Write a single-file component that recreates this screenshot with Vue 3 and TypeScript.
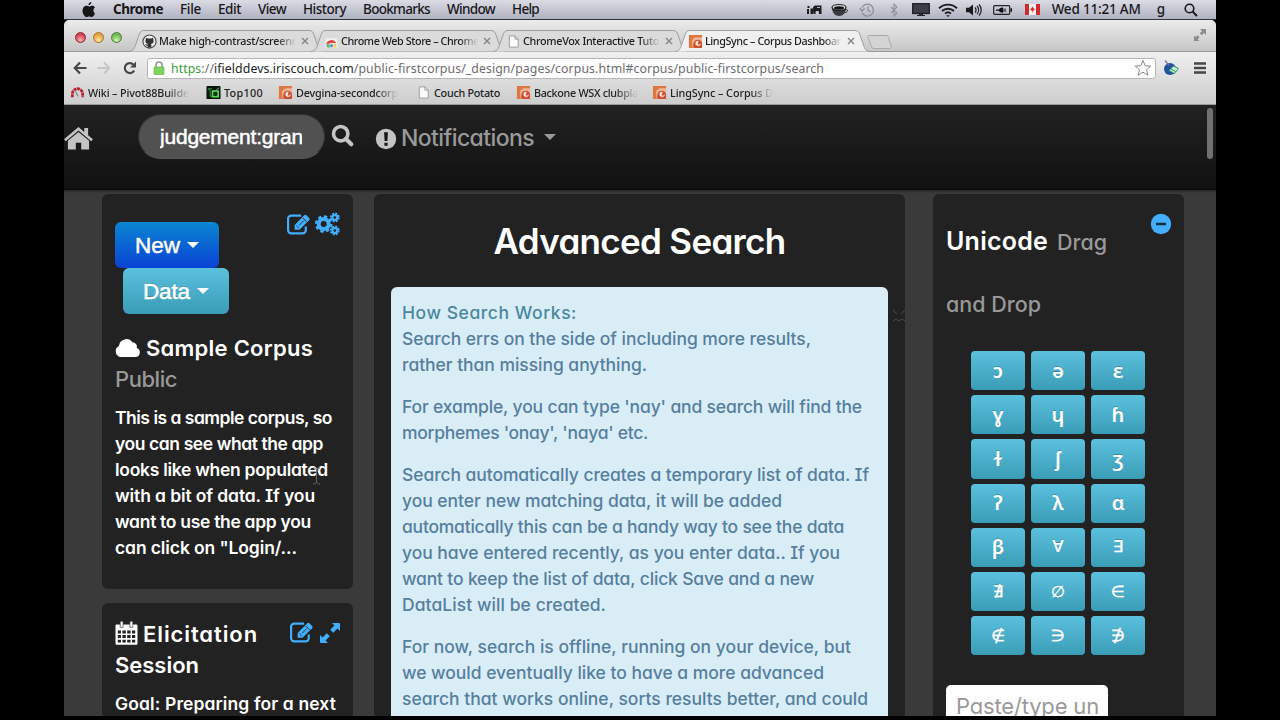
<script setup lang="ts">
import type { Directive } from 'vue'

// Spreads a single line of text over the given width by adjusting its tracking.
const vFit: Directive<HTMLElement, number> = {
  mounted(el, { value }) {
    const range = document.createRange()
    range.selectNodeContents(el)
    const natural = range.getBoundingClientRect().width
    const count = (el.textContent ?? '').trim().length
    el.style.letterSpacing = `${(value - natural) / count}px`
  },
}

interface Line { text: string; width: number }

const menus: Line[] = [
  { text: 'File', width: 21 },
  { text: 'Edit', width: 23 },
  { text: 'View', width: 28 },
  { text: 'History', width: 43 },
  { text: 'Bookmarks', width: 67 },
  { text: 'Window', width: 48 },
  { text: 'Help', width: 27 },
]

const tabs = [
  { icon: 'github', text: 'Make high-contrast/screenr', width: 137, active: false },
  { icon: 'store', text: 'Chrome Web Store – Chrome', width: 138, active: false },
  { icon: 'page', text: 'ChromeVox Interactive Tuto', width: 136, active: false },
  { icon: 'ling', text: 'LingSync – Corpus Dashboar', width: 136, active: true },
]

const bookmarks = [
  { icon: 'gauge', text: 'Wiki – Pivot88Builde', width: 101, gap: 17, fade: true },
  { icon: 'green', text: 'Top100', width: 39, gap: 15, fade: false },
  { icon: 'ling', text: 'Devgina-secondcorp', width: 102, gap: 18, fade: true },
  { icon: 'page', text: 'Couch Potato', width: 66, gap: 16, fade: false },
  { icon: 'ling', text: 'Backone WSX clubpla', width: 104, gap: 14, fade: true },
  { icon: 'ling', text: 'LingSync – Corpus D', width: 103, gap: 0, fade: true },
]

const corpusText: Line[] = [
  { text: 'This is a sample corpus, so', width: 217 },
  { text: 'you can see what the app', width: 208 },
  { text: 'looks like when populated', width: 213 },
  { text: 'with a bit of data. If you', width: 200 },
  { text: 'want to use the app you', width: 196 },
  { text: 'can click on "Login/...', width: 182 },
]

const help: Line[][] = [
  [
    { text: 'Search errs on the side of including more results,', width: 409 },
    { text: 'rather than missing anything.', width: 245 },
  ],
  [
    { text: "For example, you can type 'nay' and search will find the", width: 460 },
    { text: "morphemes 'onay', 'naya' etc.", width: 246 },
  ],
  [
    { text: 'Search automatically creates a temporary list of data. If', width: 467 },
    { text: 'you enter new matching data, it will be added', width: 380 },
    { text: 'automatically this can be a handy way to see the data', width: 442 },
    { text: 'you have entered recently, as you enter data.. If you', width: 438 },
    { text: 'want to keep the list of data, click Save and a new', width: 412 },
    { text: 'DataList will be created.', width: 204 },
  ],
  [
    { text: 'For now, search is offline, running on your device, but', width: 449 },
    { text: 'we would eventually like to have a more advanced', width: 422 },
    { text: 'search that works online, sorts results better, and could', width: 466 },
  ],
]

const letters = ['ɔ', 'ə', 'ɛ', 'ɣ', 'ɥ', 'ɦ', 'ɫ', 'ʃ', 'ʒ', 'ʔ', 'λ', 'ɑ', 'β']
const operators = ['∀', '∃', '∄', '∅', '∈', '∉', '∋', '∌']
</script>

<template>
  <div class="stage">
    <svg class="defs" width="0" height="0">
      <symbol id="github" viewBox="0 0 16 16">
        <circle cx="8" cy="8" r="7" fill="#eee" stroke="#444" stroke-width="1.2" />
        <path d="M4.2 4l2 .9h3.6l2-.9.3 2.2c1 2.6-.4 4.2-2.6 4.5.6.7.5 1.8.5 3.6H6v-1.8c-1.500.2-2-.4-2.600-1.500l2.500.3.6-.7C4 10.200 3 8.500 3.900 6.200z" fill="#333" />
      </symbol>
      <symbol id="store" viewBox="0 0 16 16">
        <path d="M2 4.500h12l.5 10H1.500z" fill="#f0f0f0" />
        <path d="M2.500 11a5.500 5 0 0 1 10.500-1.500H8z" fill="#d8453a" />
        <path d="M2.500 11c0 1.600.4 2.600 1.200 3.500H8L6 11z" fill="#5cae6c" />
        <path d="M13 9.500c.5 2 .3 3.500-.5 5H8l1.500-3.500z" fill="#f0d265" />
        <circle cx="8" cy="12.400" r="1.900" fill="#4a80d4" stroke="#fff" stroke-width=".6" />
      </symbol>
      <symbol id="page" viewBox="0 0 16 16">
        <path d="M3.500 2h6l3.500 3.500V14h-9.500z" fill="#fafafa" stroke="#9a9a9a" />
        <path d="M9.500 2v3.500H13" fill="none" stroke="#9a9a9a" />
      </symbol>
      <symbol id="ling" viewBox="0 0 16 16">
        <path d="M1 1h14v14H1z" fill="#efb592" />
        <path d="M1 1h14v2.500H9.500C6 3.500 4 6 4.300 9.500L5 15H1z" fill="#dd7842" />
        <path d="M6 15c-1.500-5 .3-9 4.300-9 2.400 0 4.700 1.200 4.700 4.200V15H6z" fill="#cc5232" />
        <path d="M8.200 11.500c-1-2.800.6-4.500 3.500-4.200-1.500 1-.4 2.200-1.400 3.800 1.800.6 3-.1 3.600-1.500.2 2.600-3.600 4.400-5.700 1.900z" fill="#fbe6dc" />
      </symbol>
      <symbol id="gauge" viewBox="0 0 16 16">
        <path d="M2.500 13V9.500a5.500 5.500 0 0 1 11 0V13" fill="none" stroke="#b4232f" stroke-width="3" stroke-dasharray="3.200 .6" />
        <path d="M8.500 12L6 7" stroke="#777" stroke-width="1.100" />
      </symbol>
      <symbol id="green" viewBox="0 0 16 16">
        <rect x=".5" y="1" width="15" height="14" rx="1" fill="#07150a" />
        <path d="M2 4h4.500M2 4l2.500 2M4.500 6v6h2" stroke="#2f8a33" stroke-width="1.200" fill="none" />
        <rect x="7" y="6.500" width="6" height="6" fill="#0b2a0f" stroke="#5bd35b" stroke-width="1.800" />
        <path d="M11 5l3-2" stroke="#5bd35b" />
      </symbol>
      <symbol id="edit" viewBox="0 0 24 22">
        <path d="M14.500 2.500H5a3 3 0 0 0-3 3v11a3 3 0 0 0 3 3h11a3 3 0 0 0 3-3V13" fill="none" stroke="#43aefc" stroke-width="2.100" />
        <path d="M8.300 11.500l9.200-9.300a1.500 1.500 0 0 1 2.100 0l2.600 2.600a1.500 1.500 0 0 1 0 2.100L13 16H8.300z" fill="#43aefc" />
        <path d="M16 4.600l3.900 3.900M10 12.200l2.200 2.200M12.500 11.800l4.500-4.500" stroke="#222" stroke-width=".8" />
      </symbol>
    </svg>

    <div class="desktop">
      <header class="menubar">
        <svg class="apple" viewBox="0 0 16 16"><path d="M10.300 0c.1 1.800-1.200 3.200-2.800 3.300C7.300 1.600 8.900.1 10.300 0zM13.900 11.400c-.8 2-2 3.600-3.300 3.600-.9 0-1.300-.6-2.400-.6s-1.600.6-2.600.6C3.700 15 1.500 11.800 1.500 8.700c0-2.900 1.900-4.900 3.900-4.900 1.200 0 2.100.7 2.800.7.7 0 1.700-.8 3.100-.8 1.100 0 2.100.5 2.800 1.600-2.300 1.400-2.100 4.900-.2 6.100z" fill="#161616" /></svg>
        <b v-fit="50" class="app-name">Chrome</b>
        <span v-for="m in menus" :key="m.text" v-fit="m.width" class="menu" :style="{ width: m.width + 'px' }">{{ m.text }}</span>
        <div class="status">
          <svg class="i-truck" viewBox="0 0 17 12"><path d="M1 5h2v5H1zM1.500 2h2v2h-2zM4.500 4.500h3V10h-3zM7 3l2-1.500h6.500V10H8z" fill="#1b1c20" /><path d="M10 7.500h2.500V10H10zM11 3.500h3" stroke="#c6c8d2" stroke-width=".9" fill="#c6c8d2" /></svg>
          <svg class="i-cup" viewBox="0 0 18 14"><path d="M1 4.500C1 10 4 13 8 13s7-3 7-8.500z" fill="#3a3b40" /><ellipse cx="8" cy="4.500" rx="7" ry="3" fill="#d4d5dc" stroke="#222" stroke-width="1.200" /><ellipse cx="8" cy="5" rx="5" ry="1.700" fill="#111" /><path d="M14.500 6.500c3-.5 3 2.500-1 3.300" fill="none" stroke="#333" /></svg>
          <svg class="i-hist" viewBox="0 0 16 14"><path d="M3 9.800A6 6 0 1 0 3 4.500M.8 5L3 8l2.600-2.600M9 3.500V7l2.400 2" fill="none" stroke="#8b8d95" stroke-width="1.300" /></svg>
          <svg class="i-bt" viewBox="0 0 8 14"><path d="M1 4l6 6-3 3V1l3 3-6 6" fill="none" stroke="#9193a0" stroke-width="1.100" /></svg>
          <svg class="i-disp" viewBox="0 0 18 14"><rect x=".7" y=".7" width="16.600" height="9.800" fill="#3d3f46" stroke="#1f2024" stroke-width="1.300" /><path d="M7 11h4v1h2v1H5v-1h2z" fill="#26272b" /></svg>
          <svg class="i-wifi" viewBox="0 0 20 14"><path d="M1 5.200a13 13 0 0 1 18 0M4 8a9 9 0 0 1 12 0M7 10.600a4.500 4.500 0 0 1 6 0" fill="none" stroke="#1c1c20" stroke-width="1.900" /><path d="M8.200 12.200h3.600L10 14z" fill="#1c1c20" /></svg>
          <svg class="i-vol" viewBox="0 0 17 14"><path d="M0 4.800h3L7 1.500v11L3 9.200H0z" fill="#1a1a1e" /><path d="M9 4.500a3.500 3.500 0 0 1 0 5M11 3a6 6 0 0 1 0 8M13 1.500a8 8 0 0 1 0 11" fill="none" stroke="#1a1a1e" stroke-width="1.200" /></svg>
          <svg class="i-batt" viewBox="0 0 20 10"><rect x=".7" y=".7" width="16" height="8.600" rx="1" fill="none" stroke="#222" stroke-width="1.200" /><path d="M3 4.400h3C6.500 3 8 2.500 10 2.500V3.700h3.200v.9H10v1h3.200v.9H10v1.200C8 7.700 6.500 7.200 6 5.800H3zM17.500 3.200h1.500v3.600h-1.500z" fill="#111" /></svg>
          <svg class="i-flag" viewBox="0 0 15 11"><path d="M0 0h15v11H0z" fill="#f8eeee" /><path d="M0 0h4v11H0zM11 0h4v11h-4zM7.500 2.500l.8 1.500 1.500 1-1 1.500-1 .2v1.500h-.6V6.700l-1-.2-1-1.500 1.500-1z" fill="#cf2a2c" /></svg>
          <span v-fit="89" class="clock">Wed 11:21 AM</span>
          <span class="user">g</span>
          <svg class="i-search" viewBox="0 0 14 14"><circle cx="5.500" cy="5.500" r="4.300" fill="none" stroke="#17171a" stroke-width="1.600" /><path d="M8.600 8.600l4.400 4.400" stroke="#17171a" stroke-width="2" /></svg>
        </div>
      </header>

      <div class="window">
        <div class="strip">
          <div class="lights"><i class="red" /><i class="amber" /><i class="lime" /></div>
          <div v-for="t in tabs" :key="t.text" class="tab" :class="{ active: t.active }">
            <svg class="tab-shape" viewBox="0 0 200 22"><path d="M0 21.500C4 21 5 19 6 16.500L10 5C11 2 12 .5 15 .5h165c3 0 4 1.500 5 4.500l4 11.500c1 3 2 4.500 6 5" :fill="t.active ? '#f0f0f0' : '#dbdbdb'" stroke="#989898" stroke-width=".9" /></svg>
            <svg class="favicon"><use :href="'#' + t.icon" /></svg>
            <span class="tab-text"><span v-fit="t.width">{{ t.text }}</span></span>
            <svg class="close" viewBox="0 0 8 8"><path d="M1 1l6 6M7 1L1 7" stroke="#858585" stroke-width="1.400" /></svg>
          </div>
          <svg class="newtab" viewBox="0 0 26 16"><path d="M3 1.500h17c1.500 0 2 .5 2.500 2l2.500 8.500c.5 1.500 0 2.500-1.500 2.500H8c-1.500 0-2-.7-2.500-2L2 3.500C1.500 2 2 1.500 3 1.500z" fill="#d4d4d4" stroke="#aaa" /></svg>
          <svg class="expand" viewBox="0 0 14 14"><path d="M7 1h6v6l-2-2-2.300 2.300-2-2L9 3zM1 7.500l1.600 1.600 2-1.800 2 2-2 2L6.300 13H1z" fill="#8c8c8c" /></svg>
        </div>

        <div class="toolbar">
          <svg class="back" viewBox="0 0 14 14"><path d="M7 1.500L1.800 7 7 12.500M2 7h11.500" fill="none" stroke="#484848" stroke-width="2.200" /></svg>
          <svg class="fwd" viewBox="0 0 14 14"><path d="M7 1.500L12.200 7 7 12.500M12 7H.5" fill="none" stroke="#c6c6c6" stroke-width="2" /></svg>
          <svg class="reload" viewBox="0 0 14 14"><path d="M11.200 9.500A5 5 0 1 1 10.500 3.700" fill="none" stroke="#484848" stroke-width="2.200" /><path d="M13 .5v6H7z" fill="#484848" /></svg>
          <div class="omnibox">
            <svg class="lock" viewBox="0 0 12 14"><path d="M3 7V4a3 3 0 0 1 6 0v3" fill="none" stroke="#8f9a8c" stroke-width="1.600" /><rect x="1" y="6" width="10" height="7.500" rx=".8" fill="#7fd45c" stroke="#5aab3f" stroke-width=".6" /></svg>
            <span v-fit="653" class="url"><em>https</em><i>://</i>ifielddevs.iriscouch.com<i>/public-firstcorpus/_design/pages/corpus.html#corpus/public-firstcorpus/search</i></span>
            <svg class="star" viewBox="0 0 18 18"><path d="M9 1.500l2.200 5.200 5.600.4-4.300 3.600 1.400 5.500L9 13.200l-4.900 3 1.400-5.500L1.200 7.100l5.600-.4z" fill="#fff" stroke="#868686" /></svg>
          </div>
          <svg class="ext" viewBox="0 0 18 18"><circle cx="8" cy="10" r="6" fill="#2450a0" /><path d="M3 1.500l4 5" stroke="#6a7a9a" stroke-width="1.300" /><path d="M7 11.500l4.500-4.500 5 2.500-4 5z" fill="#c6f2d6" stroke="#2b9664" /><path d="M9 10l4.500 2.500" stroke="#2b9664" /></svg>
          <svg class="burger" viewBox="0 0 12 12"><path d="M0 1.500h12M0 6h12M0 10.500h12" stroke="#464646" stroke-width="2.300" /></svg>
        </div>

        <div class="bookmarks">
          <div v-for="b in bookmarks" :key="b.text" class="bookmark" :style="{ marginRight: b.gap + 'px' }">
            <svg class="favicon"><use :href="'#' + b.icon" /></svg>
            <span class="bm-text" :class="{ fade: b.fade }" :style="{ width: b.width + 'px' }"><span v-fit="b.width">{{ b.text }}</span></span>
          </div>
        </div>

        <main class="page">
          <nav class="navbar">
            <svg class="home" viewBox="0 0 30 26"><path d="M15 1L0 13.800l1.800 2L15 4.700l13.200 11.100 1.800-2-5-4.300V2h-4v4.200z" fill="#c4c4c4" /><path d="M15 6.200L4 15.300V24.500h8.200v-7h5.600v7H26v-9.200z" fill="#c4c4c4" /></svg>
            <div class="query"><div class="query-clip"><span v-fit="143">judgement:gran</span></div></div>
            <svg class="magnify" viewBox="0 0 24 24"><circle cx="9.700" cy="9.700" r="7.200" fill="none" stroke="#c4c4c4" stroke-width="3.600" /><path d="M15 15l5.300 5.300" stroke="#c4c4c4" stroke-width="4.200" stroke-linecap="round" /></svg>
            <svg class="alert" viewBox="0 0 22 22"><circle cx="11" cy="11" r="10.200" fill="#c4c4c4" /><path d="M9.100 4.200h3.800l-.5 8.800H9.600zM9.400 14.700h3.200v3H9.400z" fill="#161616" /></svg>
            <span v-fit="133" class="notif">Notifications</span>
            <i class="caret dim" />
          </nav>
          <div class="scroll-thumb" />

          <div class="columns">
            <div class="column">
              <section class="panel corpus">
                <div class="tools">
                  <svg class="edit"><use href="#edit" /></svg>
                  <svg class="cogs" viewBox="0 0 25 24">
                    <g fill="none" stroke="#43aefc">
                      <circle cx="8.700" cy="12" r="5" stroke-width="4" /><circle cx="8.700" cy="12" r="7.600" stroke-width="2.400" stroke-dasharray="3.300 2.670" />
                      <circle cx="19.800" cy="5.500" r="2.500" stroke-width="2.300" /><circle cx="19.800" cy="5.500" r="4.100" stroke-width="1.700" stroke-dasharray="1.900 1.320" />
                      <circle cx="19.800" cy="18.500" r="2.500" stroke-width="2.300" /><circle cx="19.800" cy="18.500" r="4.100" stroke-width="1.700" stroke-dasharray="1.900 1.320" />
                    </g>
                  </svg>
                </div>
                <button class="btn primary"><span v-fit="45">New</span><i class="caret" /></button>
                <button class="btn info"><span v-fit="47">Data</span><i class="caret" /></button>
                <h4 class="corpus-title">
                  <svg class="cloud" viewBox="0 0 25 19"><path d="M5.800 19A5.800 5.800 0 0 1 3.500 8 7.500 7.500 0 0 1 17 4.200a4.400 4.400 0 0 1 4.200 5.700A4.700 4.700 0 0 1 20 19z" fill="#fff" /></svg>
                  <span v-fit="167">Sample Corpus</span>
                </h4>
                <div class="muted"><span v-fit="62">Public</span></div>
                <div class="body">
                  <div v-for="l in corpusText" :key="l.text" class="line"><span v-fit="l.width">{{ l.text }}</span></div>
                </div>
                <svg class="ibeam" viewBox="0 0 9 18"><path d="M1 1c2 0 3 .5 3.500 2C5 1.500 6 1 8 1M4.500 3v12M1 17c2 0 3-.5 3.500-2 .5 1.500 1.500 2 3.500 2" fill="none" stroke="#666" /></svg>
              </section>
              <section class="panel session">
                <div class="tools">
                  <svg class="edit"><use href="#edit" /></svg>
                  <svg class="resize" viewBox="0 0 22 22"><path d="M13 1h7a1 1 0 0 1 1 1v7l-2.500-2.500-4.300 4.300-3-3 4.300-4.300zM1 13l2.500 2.500 4.300-4.300 3 3-4.300 4.300L9 21H2a1 1 0 0 1-1-1z" fill="#43aefc" /></svg>
                </div>
                <h4>
                  <svg class="cal" viewBox="0 0 23 24"><path d="M1.500 3.500h20a1 1 0 0 1 1 1v18a1.200 1.200 0 0 1-1.200 1.200H1.700a1.200 1.200 0 0 1-1.200-1.200v-18a1 1 0 0 1 1-1z" fill="#fff" /><path d="M5.200.3h2.900v6H5.200zM14.900.3h2.900v6h-2.900z" fill="#fff" stroke="#222" stroke-width=".6" /><g fill="#222"><path d="M2.800 9.500h3.200v3H2.800zM7.400 9.500h3.400v3H7.400zM12.200 9.500h3.400v3h-3.400zM17 9.500h3.200v3H17zM2.800 14.100h3.200v3H2.800zM7.400 14.100h3.400v3H7.400zM12.200 14.100h3.400v3h-3.400zM17 14.100h3.200v3H17zM2.800 18.700h3.200v2.800H2.800zM7.400 18.700h3.400v2.800H7.400zM12.200 18.700h3.400v2.800h-3.400zM17 18.700h3.200v2.800H17z" /></g></svg>
                  <span v-fit="115">Elicitation</span>
                </h4>
                <h4><span v-fit="84">Session</span></h4>
                <div class="body goal"><div class="line"><span v-fit="221">Goal: Preparing for a next</span></div></div>
              </section>
            </div>

            <section class="panel search">
              <h1><span v-fit="292">Advanced Search</span></h1>
              <div class="alertbox">
                <div class="line strong"><span v-fit="175">How Search Works:</span></div>
                <div v-for="(p, i) in help" :key="i" class="para">
                  <div v-for="l in p" :key="l.text" class="line"><span v-fit="l.width">{{ l.text }}</span></div>
                </div>
              </div>
              <svg class="dismiss" viewBox="0 0 14 14"><path d="M1 1l4 4M13 1L9 5M1 12l3-2 3 2 3-2 3 2" fill="none" stroke="#4a4a4a" /></svg>
            </section>

            <section class="panel unicode">
              <svg class="minus" viewBox="0 0 22 22"><circle cx="11" cy="11" r="10.200" fill="#43aefc" /><path d="M6 11h10" stroke="#152a3a" stroke-width="2.600" /></svg>
              <h3><span v-fit="102">Unicode</span><small v-fit="50">Drag</small></h3>
              <h3 class="second"><small v-fit="95" class="first">and Drop</small></h3>
              <div class="keys">
                <button v-for="s in letters" :key="s" class="key">{{ s }}</button>
                <button v-for="s in operators" :key="s" class="key operator">{{ s }}</button>
              </div>
              <div class="paste"><div class="paste-clip"><span v-fit="143">Paste/type un</span></div></div>
            </section>
          </div>
        </main>
      </div>
    </div>
  </div>
</template>

<style>
body { background: #000; overflow: hidden; }
</style>

<style scoped>
* { box-sizing: border-box; }
.stage { width: 1280px; height: 720px; background: #000; overflow: hidden; padding: 0 64px; }
.defs { position: absolute; }
svg { display: block; flex: none; }
span, b, small { white-space: nowrap; }
.desktop { height: 716px; width: 1152px; overflow: hidden; display: flex; flex-direction: column; }

.menubar { height: 20px; flex: none; display: flex; align-items: center; padding-left: 17px; border-bottom: 1px solid #33343b; background: linear-gradient(#dadbe3, #b0b2c1); font: 500 13.500px/19px "Noto Sans", sans-serif; color: #17171a; }
.apple { width: 16px; height: 16px; margin-right: 16px; }
.app-name { width: 50px; }
.menu { margin-left: 17px; }
.status { margin-left: auto; display: flex; align-items: center; padding-right: 18px; }
.i-truck { width: 17px; height: 12px; margin-right: 8px; }
.i-cup { width: 18px; height: 14px; margin-right: 10px; }
.i-hist { width: 16px; height: 14px; margin-right: 15px; }
.i-bt { width: 8px; height: 14px; margin-right: 14px; }
.i-disp { width: 18px; height: 14px; margin-right: 8px; }
.i-wifi { width: 20px; height: 14px; margin-right: 8px; }
.i-vol { width: 17px; height: 14px; margin-right: 10px; }
.i-batt { width: 20px; height: 10px; margin-right: 12px; }
.i-flag { width: 15px; height: 11px; margin-right: 12px; }
.clock { width: 89px; }
.user { margin: 0 19px 0 16px; }
.i-search { width: 14px; height: 14px; }

.window { flex: 1; min-height: 0; display: flex; flex-direction: column; border-radius: 5px 5px 0 0; overflow: hidden; }
.strip { height: 32px; flex: none; display: flex; align-items: flex-end; position: relative; background: linear-gradient(#ececec, #c6c6c6); border-bottom: 1px solid #999; }
.lights { display: flex; gap: 7px; padding: 0 0 8px 11px; width: 65px; }
.lights i { width: 11px; height: 11px; border-radius: 50%; border: 1px solid #777; }
.lights .red { border-color: #8f2a33; background: radial-gradient(circle at 50% 80%, #fbb1b6, #d04450 65%); }
.lights .amber { border-color: #a8742e; background: radial-gradient(circle at 50% 80%, #ffe79c, #dfa345 65%); }
.lights .lime { border-color: #4b7f3c; background: radial-gradient(circle at 50% 80%, #d4f5ae, #6db953 65%); }
.tab { width: 200px; height: 22px; margin: 0 -18px -1px 0; flex: none; display: flex; align-items: center; position: relative; z-index: 1; padding-left: 13px; }
.tab.active { z-index: 2; }
.tab-shape { position: absolute; inset: 0; width: 200px; height: 22px; z-index: -1; }
.favicon { width: 15px; height: 15px; }
.tab-text { width: 140px; margin-left: 2px; overflow: hidden; font: 500 10.800px/20px "Noto Sans", sans-serif; color: #1d1d1d; mask-image: linear-gradient(90deg, #000 84%, transparent 98%); }
.close { width: 8px; height: 8px; margin-left: 2px; }
.newtab { width: 26px; height: 16px; margin: 0 0 1px 9px; }
.expand { width: 14px; height: 14px; margin: 0 9px 9px auto; }

.toolbar { height: 32px; flex: none; display: flex; align-items: center; background: linear-gradient(#f0f0f0, #dadada); padding-left: 9px; }
.back { width: 14px; height: 14px; }
.fwd { width: 14px; height: 14px; margin-left: 10px; }
.reload { width: 14px; height: 14px; margin-left: 12px; }
.omnibox { height: 21px; width: 1009px; margin-left: 10px; border: 1px solid #b5b5b5; border-radius: 3px; background: #fff; display: flex; align-items: center; padding-left: 5px; }
.lock { width: 12px; height: 14px; }
.url { margin-left: 6px; font: 12.300px/19px "Noto Sans", sans-serif; color: #222; }
.url i { font-style: normal; color: #6c6c6c; }
.url em { font-style: normal; color: #38a03c; }
.star { width: 18px; height: 18px; margin: 0 3px 0 auto; }
.ext { width: 18px; height: 18px; margin-left: 6px; }
.burger { width: 12px; height: 12px; margin-left: 14px; }

.bookmarks { height: 21px; flex: none; display: flex; align-items: center; padding: 0 0 3px 6px; background: linear-gradient(#dadada, #cdcdcd); border-bottom: 1px solid #9b9b9b; }
.bookmark { display: flex; align-items: center; gap: 3px; }
.bm-text { overflow: hidden; font: 500 10.800px/18px "Noto Sans", sans-serif; color: #222; }
.fade { mask-image: linear-gradient(90deg, #000 78%, transparent); }

.page { flex: 1; min-height: 0; position: relative; overflow: hidden; background: #3a3a3a; font-family: Inter, "Noto Sans", "DejaVu Sans", sans-serif; font-feature-settings: "cv11", "cv08"; }
.navbar { height: 85px; display: flex; align-items: flex-start; background: linear-gradient(#222, #111); border-bottom: 1px solid #0a0a0a; box-shadow: 0 1px 2px #222; }
.home { width: 29px; height: 25px; margin-top: 21px; }
.query { width: 187px; height: 45px; margin: 9px 0 0 45px; border-radius: 23px; background: #515151; border: 1px solid #333; border-bottom-color: #555; padding: 0 21px; }
.query-clip { width: 142px; overflow: hidden; font: 21px/43px "Liberation Sans", sans-serif; color: #fff; -webkit-text-stroke: .5px #fff; }
.magnify { width: 24px; height: 24px; margin: 19px 0 0 6px; }
.alert { width: 22px; height: 22px; margin: 23px 0 0 20px; }
.notif { font-size: 23px; font-weight: 500; line-height: 34px; margin: 16px 0 0 4px; color: #999; width: 133px; }
.caret { width: 0; height: 0; border: 6px solid transparent; border-top-color: #fff; border-bottom: 0; display: inline-block; flex: none; }
.caret.dim { border-top-color: #999; margin: 29px 0 0 10px; }
.scroll-thumb { position: absolute; right: 3px; top: 3px; width: 6px; height: 51px; border-radius: 3px; background: #717171; z-index: 3; }

.columns { display: grid; grid-template-columns: 251px 531px 251px; column-gap: 0; padding: 4px 0 0 38px; align-items: start; }
.column { width: 251px; display: flex; flex-direction: column; gap: 14px; }
.panel { background: #222; border-radius: 6px; position: relative; }
.search { margin-left: 21px; width: 531px; height: 560px; }
.unicode { margin-left: 49px; width: 251px; height: 560px; padding: 15px 13px 0; }
.corpus { height: 395px; padding: 28px 13px 0; }
.tools { position: absolute; right: 13px; top: 18px; display: flex; align-items: center; gap: 4px; }
.edit { width: 25px; height: 23px; }
.cogs { width: 25px; height: 24px; }
.resize { width: 22px; height: 22px; }
.btn { display: flex; align-items: center; justify-content: flex-start; border: 0; height: 46px; border-radius: 6px; padding: 0 0 0 20px; font: 22.500px/45px "Liberation Sans", sans-serif; color: #fff; text-shadow: 0 -1px 0 rgba(0, 0, 0, .25); -webkit-text-stroke: .5px #fff; }
.btn .caret { margin-left: 7px; }
.primary { width: 104px; background: linear-gradient(#0a86d2, #0943d4); }
.info { width: 106px; margin-left: 8px; background: linear-gradient(#5bc0de, #3a9db7); }
.panel h4 { margin: 0; height: 31px; line-height: 31px; font-size: 22px; font-weight: 600; color: #fff; display: flex; align-items: center; }
.panel .corpus-title { margin-top: 19px; }
.cloud { width: 26px; height: 19px; margin: -3px 5px 0 0; }
.muted { color: #999; font-size: 22px; line-height: 31px; margin-top: 0; font-weight: 500; }
.body { color: #fff; font-weight: 600; font-size: 17.500px; margin-top: 10px; }
.line { height: 26.100px; line-height: 26px; }
.ibeam { position: absolute; width: 9px; height: 18px; left: 210px; top: 273px; }
.session { height: 200px; padding: 16px 13px 0; }
.session .tools { right: 12px; top: 18px; gap: 5px; }
.cal { width: 23px; height: 24px; margin: -3px 5px 0 0; }
.goal { margin-top: 10px; }

.search h1 { margin: 0; padding-top: 20px; height: 94px; line-height: 54px; font-size: 35px; font-weight: 600; color: #fff; text-align: center; }
.alertbox { margin: -1px 17px 0; height: 500px; background: #d9edf7; border-radius: 6px; padding: 13px 11px; color: #557f9d; font-size: 17.500px; font-weight: 500; }
.strong { color: #4a87a0; }
.para { margin-bottom: 15.700px; }
.dismiss { position: absolute; right: -1px; top: 115px; width: 14px; height: 14px; }

.minus { position: absolute; width: 22px; height: 22px; right: 12px; top: 19px; }
.unicode h3 { margin: 0; height: 64px; line-height: 64px; font-size: 25px; font-weight: 600; color: #fff; }
.unicode .second { line-height: 60px; }
.unicode small { font-size: 21.500px; font-weight: 500; color: #999; margin-left: 9px; }
.unicode small.first { margin-left: 0; }
.keys { display: grid; grid-template-columns: repeat(3, 54px); gap: 5px 6px; margin: 14px 0 0 25px; }
.key { height: 39.200px; border: 0; border-radius: 4px; padding: 0; background: linear-gradient(#5bc0de, #3a9db7); color: #fff; font: 600 20px/38px "Noto Sans", "DejaVu Sans", sans-serif; text-shadow: 0 -1px 0 rgba(0, 0, 0, .2); }
.operator { font-family: "DejaVu Sans", sans-serif; font-size: 16px; font-weight: 400; -webkit-text-stroke: .4px #fff; }
.paste { margin-top: 30px; width: 162px; height: 46px; background: #fff; border-radius: 5px; padding: 0 10px; }
.paste-clip { width: 142px; overflow: hidden; color: #999; font-size: 22px; line-height: 43px; }
</style>
